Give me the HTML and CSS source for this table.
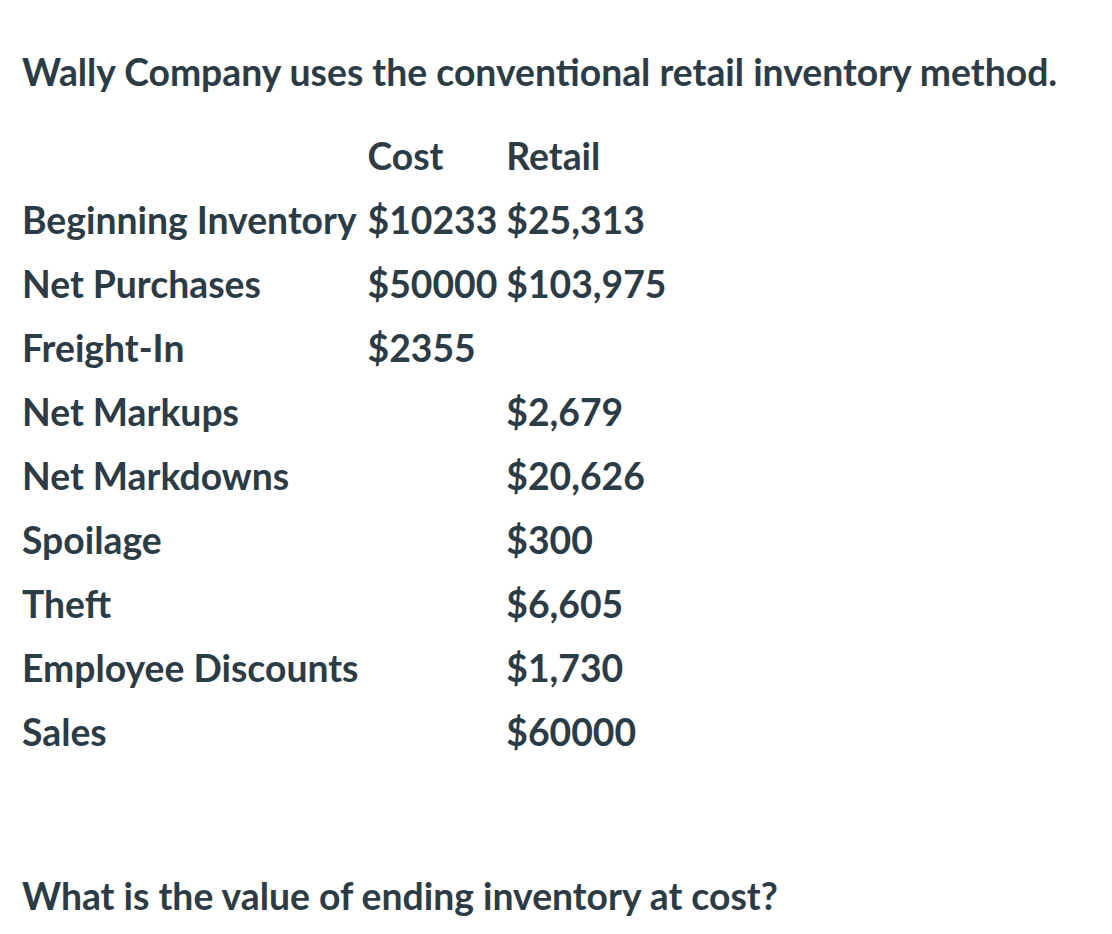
FILE: index.html
```html
<!DOCTYPE html>
<html>
<head>
<meta charset="utf-8">
<link rel="stylesheet" href="styles.css">
</head>
<body>
<div class="page">
  <p class="intro">Wally Company uses the conventional retail inventory method.</p>
  <table class="data">
    <tr><td></td><td>Cost</td><td>Retail</td></tr>
    <tr><td>Beginning Inventory</td><td>$10233</td><td>$25,313</td></tr>
    <tr><td>Net Purchases</td><td>$50000</td><td>$103,975</td></tr>
    <tr><td>Freight-In</td><td>$2355</td><td></td></tr>
    <tr><td>Net Markups</td><td></td><td>$2,679</td></tr>
    <tr><td>Net Markdowns</td><td></td><td>$20,626</td></tr>
    <tr><td>Spoilage</td><td></td><td>$300</td></tr>
    <tr><td>Theft</td><td></td><td>$6,605</td></tr>
    <tr><td>Employee Discounts</td><td></td><td>$1,730</td></tr>
    <tr><td>Sales</td><td></td><td>$60000</td></tr>
  </table>
  <p class="question">What is the value of ending inventory at cost?</p>
</div>
</body>
</html>
```
FILE: styles.css
```css
html, body {
  margin: 0;
  padding: 0;
  background: #ffffff;
}
.page {
  padding: 0 0 0 22px;
  font-family: Lato, "Liberation Sans", sans-serif;
  font-weight: 700;
  font-size: 37.3px;
  color: #2d3b45;
}
.intro {
  margin: 0;
  padding-top: 50px;
  line-height: 44px;
}
.data {
  border-collapse: collapse;
  margin-top: 30px;
}
.data td {
  padding: 0 9px 0 0;
  height: 64px;
  line-height: 44px;
  vertical-align: middle;
  text-align: left;
  white-space: nowrap;
}
.question {
  margin: 110px 0 0;
  line-height: 44px;
}
```
